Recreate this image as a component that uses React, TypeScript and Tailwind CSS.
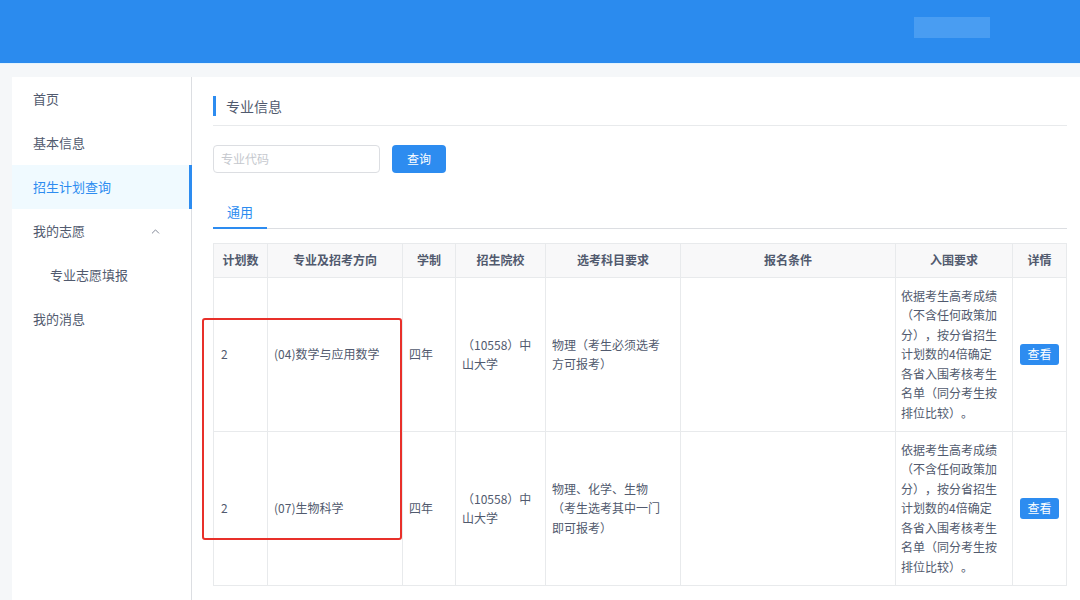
import { ChevronUp } from "lucide-react";

const font = { fontFamily: '"Noto Sans CJK SC", "Noto Sans", sans-serif' };

const cols = [
  { name: "计划数", w: "w-[54px]" },
  { name: "专业及招考方向", w: "w-[135px]" },
  { name: "学制", w: "w-[53px]" },
  { name: "招生院校", w: "w-[90px]" },
  { name: "选考科目要求", w: "w-[135px]" },
  { name: "报名条件", w: "w-[215px]" },
  { name: "入围要求", w: "w-[117px]" },
  { name: "详情", w: "w-[54px]" },
];

const rule = [
  "依据考生高考成绩",
  "（不含任何政策加",
  "分），按分省招生",
  "计划数的4倍确定",
  "各省入围考核考生",
  "名单（同分考生按",
  "排位比较）。",
];

const rows = [
  {
    count: "2",
    major: "(04)数学与应用数学",
    subjects: ["物理（考生必须选考", "方可报考）"],
  },
  {
    count: "2",
    major: "(07)生物科学",
    subjects: ["物理、化学、生物", "（考生选考其中一门", "即可报考）"],
  },
];

function Lines({ lines }: { lines: string[] }) {
  return (
    <>
      {lines.map((l) => (
        <div key={l} className="whitespace-nowrap">
          {l}
        </div>
      ))}
    </>
  );
}

const menu = [
  { label: "首页" },
  { label: "基本信息" },
  { label: "招生计划查询", active: true },
  { label: "我的志愿", open: true },
  { label: "专业志愿填报", sub: true },
  { label: "我的消息" },
];

export default function App() {
  return (
    <div
      className="h-[600px] overflow-hidden bg-[#f5f7f9] text-[#515a6e] [text-spacing-trim:space-all]"
      style={font}
    >
      {/* Header */}
      <header className="h-16 bg-[#2b8bee] flex items-start justify-end pr-[90px] pt-[17px] border-b border-[#e3f3fd]">
        <div className="w-[76px] h-[21px] bg-[#4c9ef2] opacity-90" />
      </header>

      <div className="flex pt-[13px] pl-3">
        {/* Sidebar */}
        <aside className="w-[180px] shrink-0 bg-white border-r border-[#dcdee2] h-[600px]">
          {menu.map((m) => (
            <div
              key={m.label}
              className={
                "h-11 flex items-center justify-between text-[13px] pr-[29px] " +
                (m.sub ? "pl-[38px] " : "pl-[21px] ") +
                (m.active
                  ? "bg-[#f0faff] text-[#2d8cf0] border-r-[3px] border-[#2d8cf0] -mr-px"
                  : "")
              }
            >
              <span>{m.label}</span>
              {m.open && <ChevronUp size={13} strokeWidth={1.8} className="text-[#808695]" />}
            </div>
          ))}
        </aside>

        {/* Content */}
        <main className="flex-1 bg-white pl-[21px] pr-[14px] pt-[14px]">
          <div className="flex items-center h-[30px] border-b border-[#e8eaec] pb-1 box-content">
            <div className="w-[3px] h-5 bg-[#2d8cf0]" />
            <h2 className="ml-[10px] text-[14px] text-[#515a6e]">专业信息</h2>
          </div>

          <div className="flex items-center gap-3 mt-[19px]">
            <div className="w-[167px] h-[28px] border border-[#dcdee2] rounded flex items-center px-[7px] text-[12px] text-[#c5c8ce]">
              专业代码
            </div>
            <button className="w-[54px] h-[28px] bg-[#2d8cf0] text-white text-[12px] rounded">
              查询
            </button>
          </div>

          <div className="mt-[29px] border-b border-[#dcdee2] flex">
            <div className="w-[54px] text-center text-[13px] text-[#2d8cf0] pb-[5px] border-b-2 border-[#2d8cf0] -mb-px">
              通用
            </div>
          </div>

          <div className="relative mt-[14px]">
            <table className="table-fixed border-collapse text-[12px] leading-[19.5px] w-[853px]">
              <colgroup>
                {cols.map((c) => (
                  <col key={c.name} className={c.w} />
                ))}
              </colgroup>
              <thead>
                <tr className="h-[34px] bg-[#f8f8f9]">
                  {cols.map((c) => (
                    <th
                      key={c.name}
                      className="border border-[#e8eaec] font-bold text-[12px] text-[#515a6e] text-center"
                    >
                      {c.name}
                    </th>
                  ))}
                </tr>
              </thead>
              <tbody>
                {rows.map((r) => (
                  <tr key={r.major} className="h-[154px]">
                    <td className="border border-[#e8eaec] px-[7px]">{r.count}</td>
                    <td className="border border-[#e8eaec] px-[6px] whitespace-nowrap">{r.major}</td>
                    <td className="border border-[#e8eaec] px-[6px]">四年</td>
                    <td className="border border-[#e8eaec] px-[6px]">
                      <Lines lines={["（10558）中", "山大学"]} />
                    </td>
                    <td className="border border-[#e8eaec] px-[6px]">
                      <Lines lines={r.subjects} />
                    </td>
                    <td className="border border-[#e8eaec]" />
                    <td className="border border-[#e8eaec] px-[5px] py-[6px]">
                      <Lines lines={rule} />
                    </td>
                    <td className="border border-[#e8eaec] text-center">
                      <button className="w-[39px] h-[21px] bg-[#2d8cf0] text-white text-[12px] rounded-[3px] leading-none">
                        查看
                      </button>
                    </td>
                  </tr>
                ))}
              </tbody>
            </table>

            {/* annotation box */}
            <div className="absolute left-[-11px] top-[75px] w-[200px] h-[222px] border-2 border-[#e8302a] rounded-[3px] pointer-events-none" />
          </div>
        </main>
      </div>
    </div>
  );
}
